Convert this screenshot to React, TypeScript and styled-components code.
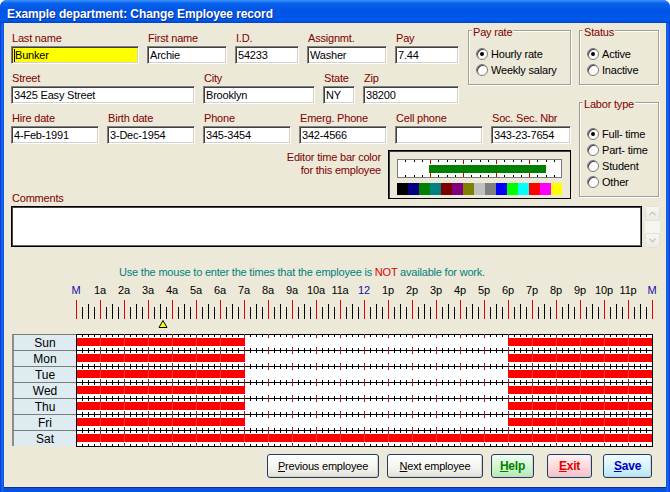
import React from 'react';
import styled, { createGlobalStyle } from 'styled-components';
import { ChevronUp, ChevronDown } from 'lucide-react';

type FieldDef = { label: string; value: string; w: number; focus?: boolean };

const ROW1: FieldDef[] = [
  { label: 'Last name', value: 'Bunker', w: 128, focus: true },
  { label: 'First name', value: 'Archie', w: 80 },
  { label: 'I.D.', value: '54233', w: 64 },
  { label: 'Assignmt.', value: 'Washer', w: 80 },
  { label: 'Pay', value: '7.44', w: 64 },
];

const ROW2: FieldDef[] = [
  { label: 'Street', value: '3425 Easy Street', w: 184 },
  { label: 'City', value: 'Brooklyn', w: 112 },
  { label: 'State', value: 'NY', w: 32 },
  { label: 'Zip', value: '38200', w: 96 },
];

const ROW3: FieldDef[] = [
  { label: 'Hire date', value: '4-Feb-1991', w: 88 },
  { label: 'Birth date', value: '3-Dec-1954', w: 88 },
  { label: 'Phone', value: '345-3454', w: 88 },
  { label: 'Emerg. Phone', value: '342-4566', w: 88 },
  { label: 'Cell phone', value: '', w: 88 },
  { label: 'Soc. Sec. Nbr', value: '343-23-7654', w: 80 },
];

const PALETTE = [
  '#000000', '#000080', '#008000', '#008080', '#800000', '#800080', '#808000', '#c0c0c0',
  '#808080', '#0000ff', '#00ff00', '#00ffff', '#ff0000', '#ff00ff', '#ffff00',
];

const HOURS = [
  'M', '1a', '2a', '3a', '4a', '5a', '6a', '7a', '8a', '9a', '10a', '11a',
  '12', '1p', '2p', '3p', '4p', '5p', '6p', '7p', '8p', '9p', '10p', '11p', 'M',
];

const WEEK: { day: string; off: [number, number][] }[] = [
  { day: 'Sun', off: [[0, 7], [18, 24]] },
  { day: 'Mon', off: [[0, 7], [18, 24]] },
  { day: 'Tue', off: [[0, 7], [18, 24]] },
  { day: 'Wed', off: [[0, 7], [18, 24]] },
  { day: 'Thu', off: [[0, 7], [18, 24]] },
  { day: 'Fri', off: [[0, 7], [18, 24]] },
  { day: 'Sat', off: [[0, 24]] },
];

const HOUR_W = 24;
const ROW_H = 16;
const GRID_W = HOUR_W * 24 + 1;

const Field: React.FC<{ def: FieldDef }> = ({ def }) => (
  <FieldBox $w={def.w}>
    <Label>{def.label}</Label>
    <TextBox $focus={def.focus}>
      {def.focus && <Caret />}
      {def.value}
    </TextBox>
  </FieldBox>
);

const Radio: React.FC<{ label: string; checked?: boolean }> = ({ label, checked }) => (
  <RadioRow>
    <RadioCircle>{checked && <RadioDot />}</RadioCircle>
    <span>{label}</span>
  </RadioRow>
);

// small preview of the employee's bar in the editor colour
const MiniBar = () => {
  const ticks: React.ReactNode[] = [];
  for (let j = 1; j < 20; j++) {
    const x = Math.round(j * 8.25);
    const hour = j % 4 === 0;
    const h = hour ? 4 : 2;
    const c = hour ? '#c00000' : '#000';
    ticks.push(<rect key={`t${j}`} x={x} y={1} width={1} height={h} fill={c} />);
    ticks.push(<rect key={`b${j}`} x={x} y={18 - h} width={1} height={h} fill={c} />);
  }
  return (
    <svg width={165} height={19} shapeRendering="crispEdges">
      <rect x={0.5} y={0.5} width={164} height={18} fill="#fff" stroke="#7a7a7a" />
      <rect x={32} y={6} width={117} height={8} fill="#008000" />
      {ticks}
    </svg>
  );
};

const Ruler = () => {
  const marks: React.ReactNode[] = [];
  for (let h = 0; h <= 24; h++) {
    marks.push(<rect key={`h${h}`} x={h * HOUR_W} y={2} width={1} height={19} fill="#e00000" />);
    if (h < 24) {
      marks.push(<rect key={`q1${h}`} x={h * HOUR_W + 6} y={9} width={1} height={12} fill="#000" />);
      marks.push(<rect key={`q2${h}`} x={h * HOUR_W + 12} y={6} width={1} height={15} fill="#000" />);
      marks.push(<rect key={`q3${h}`} x={h * HOUR_W + 18} y={9} width={1} height={12} fill="#000" />);
    }
  }
  return (
    <svg width={GRID_W} height={31}>
      <g shapeRendering="crispEdges">{marks}</g>
      <polygon points="87,22.5 83,29.5 91,29.5" fill="#ffff00" stroke="#000" strokeWidth={1} />
    </svg>
  );
};

const ScheduleChart = () => {
  const rows = WEEK.length;
  const height = rows * ROW_H + 1;
  const parts: React.ReactNode[] = [];
  WEEK.forEach((d, k) => {
    d.off.forEach(([a, b], i) => {
      parts.push(
        <rect key={`r${k}-${i}`} x={a * HOUR_W} y={k * ROW_H + 4} width={(b - a) * HOUR_W + 1} height={8} fill="#ff0000" />,
      );
      for (let h = a + 1; h < b; h++) {
        parts.push(<rect key={`rl${k}-${h}`} x={h * HOUR_W} y={k * ROW_H + 4} width={1} height={8} fill="#f04848" />);
      }
    });
  });
  for (let k = 0; k <= rows; k++) {
    const y = k * ROW_H;
    parts.push(<rect key={`l${k}`} x={0} y={y} width={GRID_W} height={1} fill="#000" />);
    for (let j = 0; j <= 96; j++) {
      const hour = j % 4 === 0;
      const len = hour ? 3 : 2;
      const top = Math.max(0, y - len);
      const bottom = Math.min(height, y + len + 1);
      parts.push(
        <rect key={`t${k}-${j}`} x={j * 6} y={top} width={1} height={bottom - top} fill={hour ? '#a01818' : '#000'} />,
      );
    }
  }
  parts.push(<rect key="bl" x={0} y={0} width={1} height={height} fill="#000" />);
  parts.push(<rect key="br" x={GRID_W - 1} y={0} width={1} height={height} fill="#000" />);
  return (
    <svg width={GRID_W} height={height} shapeRendering="crispEdges">
      <rect x={0} y={0} width={GRID_W} height={height} fill="#fff" />
      {parts}
    </svg>
  );
};

export default function App() {
  return (
    <>
      <GlobalStyle />
      <Window>
        <TitleBar>Example department: Change Employee record</TitleBar>
        <Body>
          <TopSection>
            <LeftCol>
              <UpperArea>
                <FieldRows>
                  <FieldRow>{ROW1.map(f => <Field key={f.label} def={f} />)}</FieldRow>
                  <FieldRow>{ROW2.map(f => <Field key={f.label} def={f} />)}</FieldRow>
                </FieldRows>
                <Group $w={103} $h={55}>
                  <Legend>Pay rate</Legend>
                  <RadioList $top={8}>
                    <Radio label="Hourly rate" checked />
                    <Radio label="Weekly salary" />
                  </RadioList>
                </Group>
              </UpperArea>
              <FieldRow $top={7}>{ROW3.map(f => <Field key={f.label} def={f} />)}</FieldRow>
              <EditorRow>
                <EditorText>
                  Editor time bar color
                  <br />
                  for this employee
                </EditorText>
                <ColorBox>
                  <MiniBar />
                  <Palette>
                    {PALETTE.map(c => <Swatch key={c} $c={c} />)}
                  </Palette>
                </ColorBox>
              </EditorRow>
            </LeftCol>
            <RightCol>
              <Group $w={80} $h={55}>
                <Legend>Status</Legend>
                <RadioList $top={8}>
                  <Radio label="Active" checked />
                  <Radio label="Inactive" />
                </RadioList>
              </Group>
              <Group $w={80} $h={95} $top={17}>
                <Legend>Labor type</Legend>
                <RadioList $top={16}>
                  <Radio label="Full- time" checked />
                  <Radio label="Part- time" />
                  <Radio label="Student" />
                  <Radio label="Other" />
                </RadioList>
              </Group>
            </RightCol>
          </TopSection>

          <CommentsLabel>Comments</CommentsLabel>
          <CommentsRow>
            <CommentsBox />
            <ScrollBar>
              <ScrollButton><ChevronUp size={11} strokeWidth={3} /></ScrollButton>
              <ScrollTrack />
              <ScrollButton><ChevronDown size={11} strokeWidth={3} /></ScrollButton>
            </ScrollBar>
          </CommentsRow>

          <Instruction>
            Use the mouse to enter the times that the employee is <NotWord>NOT</NotWord> available for work.
          </Instruction>
          <HourLabels>
            {HOURS.map((h, i) => (
              <HourLabel key={i} $mark={h === 'M' || h === '12'}>{h}</HourLabel>
            ))}
          </HourLabels>
          <RulerWrap>
            <Ruler />
          </RulerWrap>
          <Schedule>
            <DayList>
              {WEEK.map(d => <DayCell key={d.day}>{d.day}</DayCell>)}
            </DayList>
            <ScheduleChart />
          </Schedule>

          <ButtonBar>
            <Button $w={112}><u>P</u>revious employee</Button>
            <Button $w={96}><u>N</u>ext employee</Button>
            <Button $w={43} $tone="green"><u>H</u>elp</Button>
            <Button $w={45} $tone="red" $ml={5}><u>E</u>xit</Button>
            <Button $w={49} $tone="blue" $ml={3}><u>S</u>ave</Button>
          </ButtonBar>
        </Body>
      </Window>
    </>
  );
}

const GlobalStyle = createGlobalStyle`
  html, body {
    margin: 0;
    padding: 0;
    background: #ffffff;
  }
  body {
    font-family: 'Liberation Sans', Arial, sans-serif;
    font-size: 11px;
    letter-spacing: -0.2px;
  }
  * {
    box-sizing: border-box;
  }
`;

const Window = styled.div`
  width: 670px;
  height: 492px;
  display: flex;
  flex-direction: column;
  background: linear-gradient(90deg, #0831d9 0, #166aee 2px, #0753e0 4px, #0753e0 666px, #166aee 668px, #0831d9 670px);
  border-radius: 7px 7px 0 0;
  overflow: hidden;
`;

const TitleBar = styled.div`
  height: 23px;
  flex: none;
  padding: 4px 0 0 7px;
  display: flex;
  align-items: center;
  background: linear-gradient(#3d95ff 0%, #0a62ec 14%, #0055e5 45%, #0059ed 85%, #0047cc 100%);
  color: #ffffff;
  font-size: 12px;
  font-weight: bold;
  letter-spacing: -0.1px;
  text-shadow: 1px 1px 0 #0a2d8c;
`;

const Body = styled.div`
  flex: 1;
  margin: 0 4px 4px;
  padding: 7px 0 0 7px;
  background: #ece9d8;
  display: flex;
  flex-direction: column;
  border-bottom: 1px solid #0a2da8;
`;

const TopSection = styled.div`
  display: flex;
  gap: 8px;
  align-items: flex-start;
`;

const LeftCol = styled.div`
  width: 560px;
  display: flex;
  flex-direction: column;
`;

const UpperArea = styled.div`
  display: flex;
  gap: 9px;
  align-items: flex-start;
`;

const FieldRows = styled.div`
  width: 448px;
  margin-top: 1px;
  display: flex;
  flex-direction: column;
  gap: 7px;
`;

const FieldRow = styled.div<{ $top?: number }>`
  display: flex;
  gap: 8px;
  margin-top: ${p => p.$top ?? 0}px;
`;

const FieldBox = styled.div<{ $w: number }>`
  width: ${p => p.$w}px;
  display: flex;
  flex-direction: column;
`;

const Label = styled.div`
  height: 15px;
  line-height: 15px;
  padding-left: 1px;
  color: #800000;
  white-space: nowrap;
`;

const TextBox = styled.div<{ $focus?: boolean }>`
  height: 18px;
  display: flex;
  align-items: center;
  padding-left: 2px;
  background: ${p => (p.$focus ? '#ffff00' : '#ffffff')};
  border-top: 1px solid #808080;
  border-left: 1px solid #808080;
  border-bottom: 1px solid #ffffff;
  border-right: 1px solid #ffffff;
  box-shadow: inset 1px 1px 0 #404040, inset -1px -1px 0 #d4d0c8;
  color: #000000;
  white-space: nowrap;
  overflow: hidden;
`;

const Caret = styled.span`
  width: 1px;
  height: 13px;
  background: #000000;
  flex: none;
`;

const Group = styled.div<{ $w: number; $h: number; $top?: number }>`
  width: ${p => p.$w}px;
  height: ${p => p.$h}px;
  margin-top: ${p => p.$top ?? 0}px;
  padding-left: 7px;
  border: 1px solid #a09f94;
  box-shadow: inset 1px 1px 0 #ffffff, 1px 1px 0 #ffffff;
  flex: none;
`;

const Legend = styled.div`
  width: fit-content;
  margin: -5px 0 0 -4px;
  padding: 0 1px;
  line-height: 12px;
  background: #ece9d8;
  color: #800000;
  white-space: nowrap;
`;

const RadioList = styled.div<{ $top: number }>`
  margin-top: ${p => p.$top}px;
  display: flex;
  flex-direction: column;
`;

const RadioRow = styled.div`
  height: 16px;
  display: flex;
  align-items: center;
  gap: 3px;
  color: #000000;
  white-space: nowrap;
`;

const RadioCircle = styled.span`
  width: 12px;
  height: 12px;
  flex: none;
  border-radius: 50%;
  background: #ffffff;
  border: 1px solid #7a7a7a;
  box-shadow: inset 1px 1px 0 #404040;
  display: flex;
  align-items: center;
  justify-content: center;
`;

const RadioDot = styled.span`
  width: 4px;
  height: 4px;
  border-radius: 50%;
  background: #000000;
`;

const EditorRow = styled.div`
  margin-top: 6px;
  display: flex;
  justify-content: flex-end;
  align-items: flex-start;
  gap: 7px;
`;

const EditorText = styled.div`
  margin-top: 1px;
  text-align: right;
  line-height: 13px;
  color: #800000;
`;

const ColorBox = styled.div`
  width: 183px;
  height: 49px;
  padding: 8px 8px 3px;
  border: 1px solid #000000;
  box-shadow: inset 1px 1px 0 #404040;
  display: flex;
  flex-direction: column;
  gap: 5px;
`;

const Palette = styled.div`
  display: flex;
  height: 12px;
`;

const Swatch = styled.div<{ $c: string }>`
  width: 11px;
  height: 12px;
  background: ${p => p.$c};
`;

const RightCol = styled.div`
  width: 80px;
  display: flex;
  flex-direction: column;
`;

const CommentsLabel = styled.div`
  margin-top: -9px;
  height: 16px;
  line-height: 16px;
  padding-left: 1px;
  color: #800000;
  width: fit-content;
`;

const CommentsRow = styled.div`
  display: flex;
  gap: 3px;
  align-items: flex-start;
`;

const CommentsBox = styled.div`
  width: 631px;
  height: 41px;
  background: #ffffff;
  border: 1px solid #000000;
  box-shadow: inset 1px 1px 0 #444444, inset -1px -1px 0 #666666;
`;

const ScrollBar = styled.div`
  width: 15px;
  height: 42px;
  display: flex;
  flex-direction: column;
  background: #f6f5ef;
`;

const ScrollButton = styled.div`
  height: 15px;
  display: flex;
  align-items: center;
  justify-content: center;
  background: linear-gradient(#f7f6f2, #ebeae3);
  border: 1px solid #e2e1da;
  border-radius: 2px;
  color: #c6c4b8;
`;

const ScrollTrack = styled.div`
  flex: 1;
`;

const Instruction = styled.div`
  margin-top: 17px;
  width: 582px;
  height: 14px;
  line-height: 14px;
  text-align: center;
  color: #008080;
  white-space: nowrap;
`;

const NotWord = styled.span`
  color: #e00000;
`;

const HourLabels = styled.div`
  margin: 4px 0 0 53px;
  height: 14px;
  display: flex;
`;

const HourLabel = styled.div<{ $mark?: boolean }>`
  width: 24px;
  flex: none;
  line-height: 14px;
  text-align: center;
  color: ${p => (p.$mark ? '#1010b0' : '#000000')};
  white-space: nowrap;
`;

const RulerWrap = styled.div`
  margin: 1px 0 0 65px;
  height: 31px;
  display: flex;
`;

const Schedule = styled.div`
  margin: 5px 0 0 1px;
  display: flex;
`;

const DayList = styled.div`
  width: 64px;
  display: flex;
  flex-direction: column;
`;

const DayCell = styled.div`
  height: 16px;
  display: flex;
  align-items: center;
  justify-content: center;
  background: #deebf1;
  border-top: 1px solid #7d7d7d;
  border-left: 2px solid #8c8c8c;
  color: #000000;
  font-size: 12px;
  letter-spacing: 0;
`;

const TONES = {
  plain: { bg: 'linear-gradient(#ffffff 0%, #f4f3ee 60%, #e3e0d4 100%)', fg: '#000000', weight: 'normal', size: 11 },
  green: { bg: 'linear-gradient(#f0fdf0 0%, #d2f5d0 55%, #b6e8b2 100%)', fg: '#008000', weight: 'bold', size: 12 },
  red: { bg: 'linear-gradient(#fff0f2 0%, #fdd8dc 55%, #f5c0c6 100%)', fg: '#e00000', weight: 'bold', size: 12 },
  blue: { bg: 'linear-gradient(#f0fcff 0%, #d4f2fc 55%, #b8e4f4 100%)', fg: '#0000c0', weight: 'bold', size: 12 },
};

const ButtonBar = styled.div`
  margin-top: 7px;
  padding-right: 14px;
  display: flex;
  justify-content: flex-end;
  gap: 8px;
`;

const Button = styled.button<{ $w: number; $tone?: keyof typeof TONES; $ml?: number }>`
  width: ${p => p.$w}px;
  height: 24px;
  margin-left: ${p => p.$ml ?? 0}px;
  padding: 0;
  border: 1px solid #1f3c6e;
  border-radius: 3px;
  background: ${p => TONES[p.$tone ?? 'plain'].bg};
  color: ${p => TONES[p.$tone ?? 'plain'].fg};
  font-family: 'Liberation Sans', Arial, sans-serif;
  font-size: ${p => TONES[p.$tone ?? 'plain'].size}px;
  font-weight: ${p => TONES[p.$tone ?? 'plain'].weight};
  letter-spacing: -0.2px;
  white-space: nowrap;
  box-shadow: inset -1px -1px 0 #d6d0c5;
`;
